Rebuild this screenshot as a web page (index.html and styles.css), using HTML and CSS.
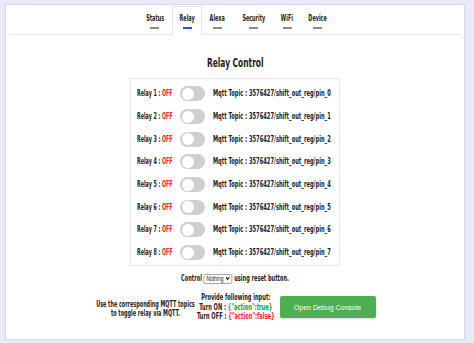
FILE: index.html
```
<!DOCTYPE html>
<html>
<head>
<meta charset="utf-8">
<link rel="stylesheet" href="styles.css">
</head>
<body>
<div class="card">
  <nav class="tabs">
    <div class="tab"><span class="tl">Status</span><i></i></div>
    <div class="tab active"><span class="tl">Relay</span><i></i></div>
    <div class="tab"><span class="tl">Alexa</span><i></i></div>
    <div class="tab"><span class="tl">Security</span><i></i></div>
    <div class="tab"><span class="tl">WiFi</span><i></i></div>
    <div class="tab"><span class="tl">Device</span><i></i></div>
  </nav>
  <h1 class="title"><span class="title-t">Relay Control</span></h1>
  <div class="relays">
    <div class="row"><span class="lbl">Relay 1 : <b class="off">OFF</b></span><span class="sw"></span><span class="topic">Mqtt Topic : 3576427/shift_out_reg/pin_0</span></div>
    <div class="row"><span class="lbl">Relay 2 : <b class="off">OFF</b></span><span class="sw"></span><span class="topic">Mqtt Topic : 3576427/shift_out_reg/pin_1</span></div>
    <div class="row"><span class="lbl">Relay 3 : <b class="off">OFF</b></span><span class="sw"></span><span class="topic">Mqtt Topic : 3576427/shift_out_reg/pin_2</span></div>
    <div class="row"><span class="lbl">Relay 4 : <b class="off">OFF</b></span><span class="sw"></span><span class="topic">Mqtt Topic : 3576427/shift_out_reg/pin_3</span></div>
    <div class="row"><span class="lbl">Relay 5 : <b class="off">OFF</b></span><span class="sw"></span><span class="topic">Mqtt Topic : 3576427/shift_out_reg/pin_4</span></div>
    <div class="row"><span class="lbl">Relay 6 : <b class="off">OFF</b></span><span class="sw"></span><span class="topic">Mqtt Topic : 3576427/shift_out_reg/pin_5</span></div>
    <div class="row"><span class="lbl">Relay 7 : <b class="off">OFF</b></span><span class="sw"></span><span class="topic">Mqtt Topic : 3576427/shift_out_reg/pin_6</span></div>
    <div class="row"><span class="lbl">Relay 8 : <b class="off">OFF</b></span><span class="sw"></span><span class="topic">Mqtt Topic : 3576427/shift_out_reg/pin_7</span></div>
  </div>
  <div class="control"><span class="control-t">Control <span class="sel">Nothing <svg class="chev" width="7" height="5" viewBox="0 0 7 5"><path d="M1 1 L3.5 3.5 L6 1" fill="none" stroke="#222" stroke-width="1.4"/></svg></span> using reset button.</span></div>
  <div class="bottom">
    <div class="hint"><span class="hint-t">Use the corresponding MQTT topics<br>to toggle relay via MQTT.</span></div>
    <div class="input"><span class="input-t">Provide following input:<br>Turn ON : <span class="on">{"action":true}</span><br>Turn OFF : <span class="off">{"action":false}</span></span></div>
    <button class="debug">Open Debug Console</button>
  </div>
</div>
</body>
</html>
```
FILE: styles.css
```
html, body { margin: 0; padding: 0; }
body {
  background: #e8ebf7;
  font-family: "DejaVu Sans Condensed", "DejaVu Sans", sans-serif;
  font-weight: bold;
  color: #222;
  width: 474px;
  height: 343px;
  overflow: hidden;
}
.card {
  margin: 4px 9px 0 5px;
  height: 336px;
  background: #fff;
  border: 1px solid #d6dae6;
  box-sizing: border-box;
  padding: 0 3px;
}
.tabs {
  display: flex;
  justify-content: center;
  border-bottom: 1px solid #e8e8e8;
  height: 28px;
  margin-top: 1px;
  padding-left: 3px;
}
.tab {
  display: flex;
  flex-direction: column;
  align-items: center;
  padding: 7px 3px 0;
  font-size: 8px;
  line-height: 10px;
  color: #222;
  box-sizing: border-box;
  height: 28px;
  border: 1px solid transparent;
  border-bottom: none;
}
.tl { display: inline-block; transform: scaleX(0.68); white-space: nowrap; }
.tab.active { border-color: #e4e4e4; background: #fff; height: 29px; margin-bottom: -1px; }
.tab i { display: block; width: 9px; height: 1.5px; background: #8a8a8a; margin-top: 3px; }
.tab.active i { background: #1c55d6; }
.title {
  margin: 20px 0 0;
  text-align: center;
  font-size: 13px;
  line-height: 16px;
  font-weight: bold;
  color: #222;
}
.title-t { display: inline-block; transform: scaleX(0.64); }
.relays {
  width: 210px;
  margin: 7px auto 0;
  border: 1px solid #e6e6e6;
  box-sizing: border-box;
  padding: 3.5px 0 1px 6px;
  font-size: 8px;
}
.row {
  display: flex;
  align-items: center;
  height: 22.7px;
}
.lbl {
  flex: 0 0 43px;
  width: 43px;
  white-space: nowrap;
  transform: scaleX(0.665);
  transform-origin: left center;
}
.off { color: #ff1a1a; font-weight: bold; }
.on { color: #23a023; }
.sw {
  flex: 0 0 25px;
  height: 15px;
  border-radius: 8px;
  background: #cfcfcf;
  position: relative;
  margin-right: 8px;
}
.sw::after {
  content: "";
  position: absolute;
  left: 1.5px; top: 1.5px;
  width: 12px; height: 12px;
  border-radius: 50%;
  background: #fff;
}
.topic {
  white-space: nowrap;
  transform: scaleX(0.715);
  transform-origin: left center;
}
.control {
  display: flex;
  justify-content: center;
  font-size: 8px;
  margin-top: 7px;
  line-height: 12px;
}
.control-t { white-space: nowrap; transform: scaleX(0.7); display: inline-block; }
.sel {
  display: inline-flex;
  align-items: center;
  gap: 3px;
  font-family: "Liberation Sans", sans-serif;
  font-weight: normal;
  font-size: 7px;
  height: 10px;
  padding: 0 2px 0 3px;
  border: 1px solid #9a9a9a;
  border-radius: 2px;
  vertical-align: middle;
  box-sizing: border-box;
  line-height: 8px;
}
.bottom {
  display: flex;
  justify-content: center;
  align-items: center;
  margin-top: 8px;
  font-size: 8px;
  line-height: 9.6px;
  text-align: center;
  padding-left: 2px;
}
.hint { width: 98px; display: flex; justify-content: center; margin-top: 4px; }
.hint-t { white-space: nowrap; transform: scaleX(0.68); display: inline-block; }
.input { width: 76px; display: flex; justify-content: center; margin-left: 3px; }
.input-t { white-space: nowrap; transform: scaleX(0.71); display: inline-block; }
.debug {
  background: #4caf50;
  color: #fff;
  border: none;
  border-radius: 2px;
  font-family: "Liberation Sans", sans-serif;
  font-weight: normal;
  font-size: 7px;
  width: 96px;
  height: 22px;
  margin-left: 6px;
  box-shadow: 0 1px 2px rgba(0,0,0,0.15);
}
```
